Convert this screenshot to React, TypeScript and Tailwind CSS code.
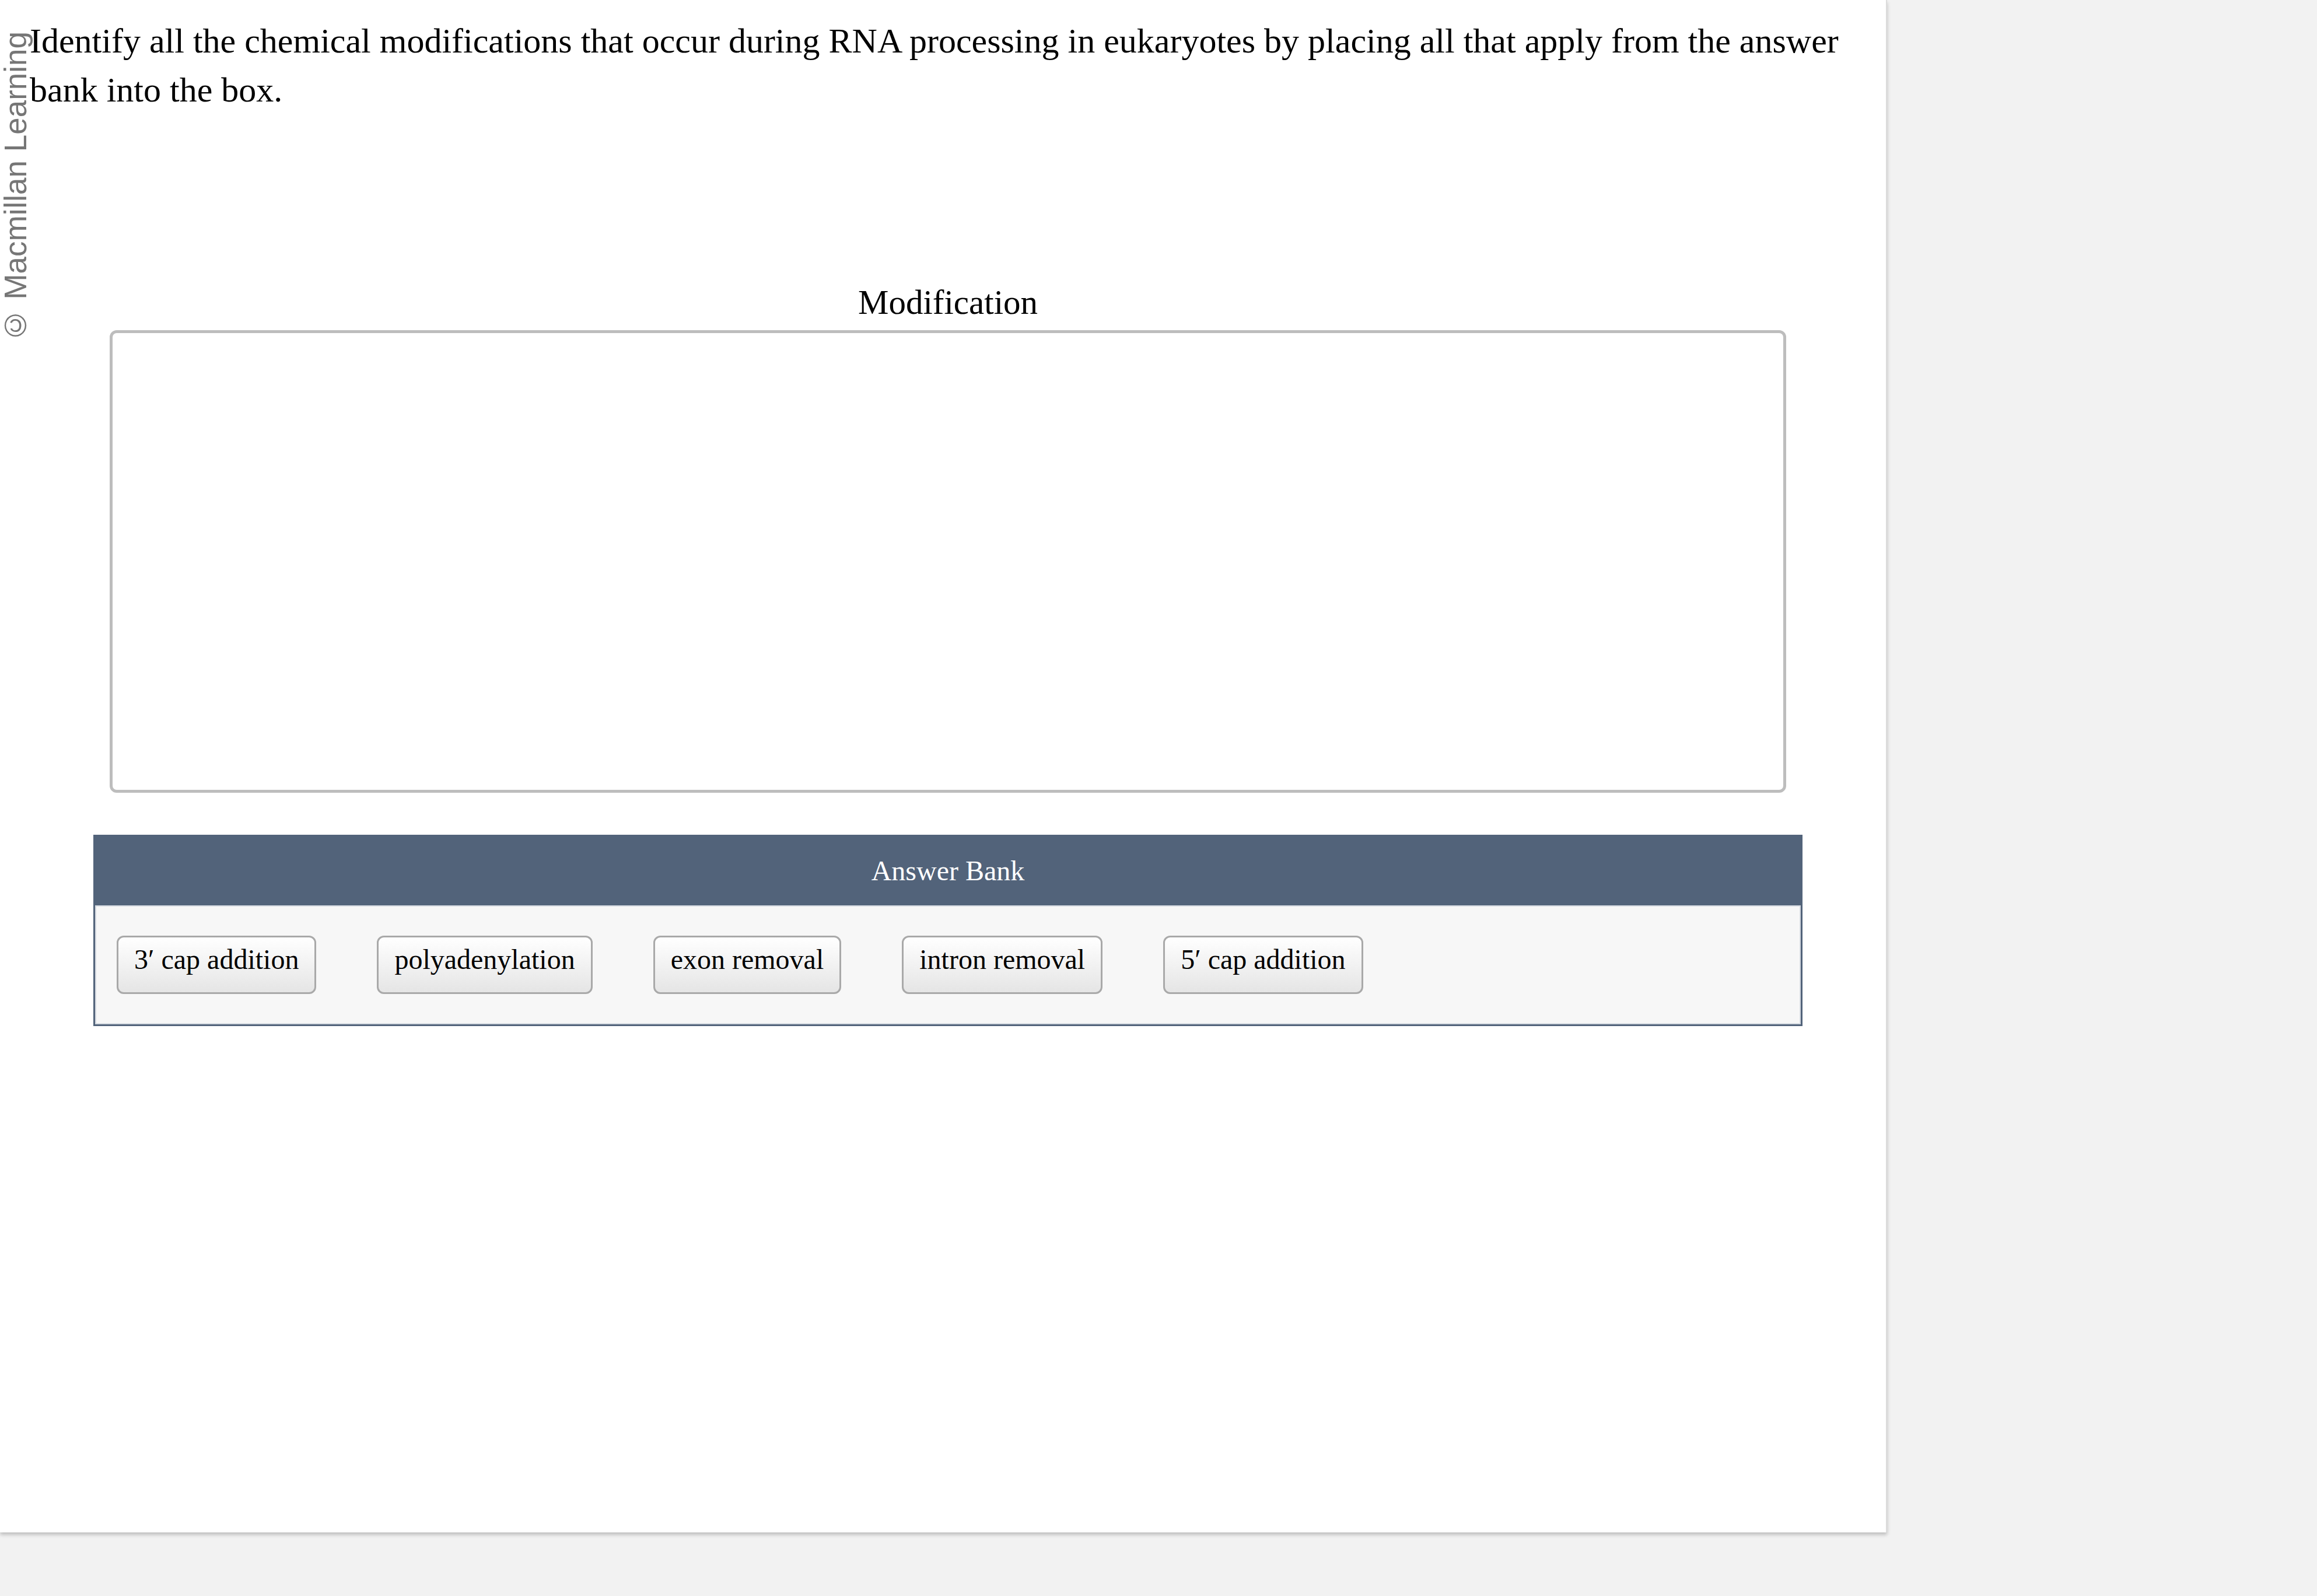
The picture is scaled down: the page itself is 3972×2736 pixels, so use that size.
import React from 'react';

const answers = ['3′ cap addition', 'polyadenylation', 'exon removal', 'intron removal', '5′ cap addition'];

const serif = "font-['Liberation_Serif','Times_New_Roman',serif]";

const AnswerChip: React.FC<{ label: string }> = ({ label }) => (
  <div
    className={`${serif} text-[48px] leading-[55px] text-black whitespace-nowrap px-[27px] pt-[10px] pb-[29px] rounded-[12px] border-[3px] border-[#a9a9a9] bg-gradient-to-b from-[#ffffff] to-[#e5e5e5]`}
  >
    {label}
  </div>
);

const App: React.FC = () => {
  return (
    <div className="min-h-[2736px] w-[3972px] bg-[#f2f2f2]">
      <div className="relative w-[3235px] h-[2627px] bg-white border-r-2 border-[#dcdcdc] shadow-[0_4px_6px_rgba(0,0,0,0.22)]">
        {/* copyright watermark along the left edge */}
        <div className="absolute left-0 top-[54px] [writing-mode:vertical-rl] rotate-180 font-['Liberation_Sans',Arial,sans-serif] text-[53px] leading-[53px] text-[#767676] whitespace-nowrap">
          © Macmillan Learning
        </div>

        <p className={`${serif} text-[60px] leading-[84px] text-black pl-[51px] pr-[20px] pt-[28px]`}>
          Identify all the chemical modifications that occur during RNA processing in eukaryotes by placing all that
          apply from the answer bank into the box.
        </p>

        <div className="ml-[188px] w-[2874px] mt-[288px]">
          <div className={`${serif} text-[59px] leading-[68px] text-black text-center`}>Modification</div>
          <div className="mt-[14px] h-[793px] rounded-[12px] border-[5px] border-[#bdbdbd] bg-white" />
        </div>

        <div className="ml-[160px] w-[2930px] mt-[72px] border-[3px] border-[#52637a]">
          <div className={`${serif} h-[118px] flex items-center justify-center bg-[#52637a] text-white text-[48px]`}>
            Answer Bank
          </div>
          <div className="h-[204px] bg-[#f7f7f7] border-2 border-[#d4d9e0] flex items-center gap-[104px] pl-[35px]">
            {answers.map(a => (
              <AnswerChip key={a} label={a} />
            ))}
          </div>
        </div>
      </div>
    </div>
  );
};

export default App;
